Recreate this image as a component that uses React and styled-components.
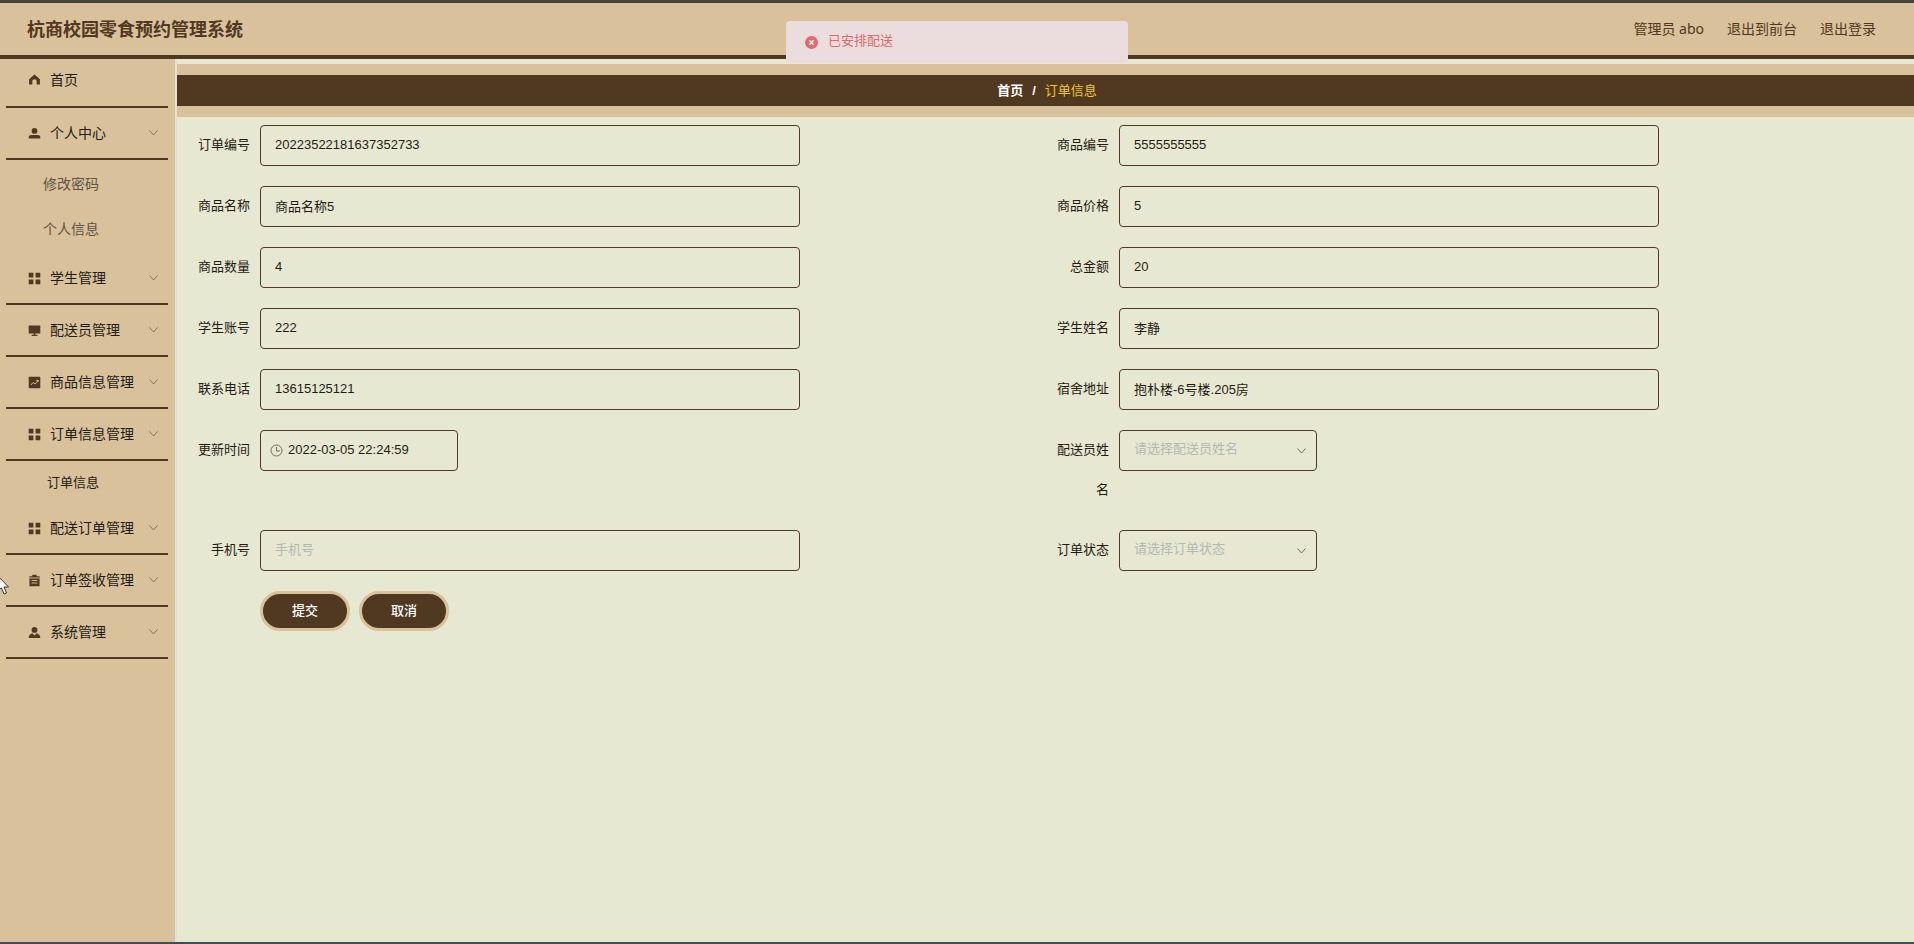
import React from "react";
import styled, { createGlobalStyle, css } from "styled-components";

const sans = `"Liberation Sans", "Noto Sans CJK SC", sans-serif`;
const menuSans = `"Noto Sans", "Noto Sans CJK SC", sans-serif`;

const GlobalStyle = createGlobalStyle`
  * {
    box-sizing: border-box;
  }
  body {
    margin: 0;
    background-color: #e7e8d2;
    font-family: ${sans};
    font-size: 13px;
    color: #1f1c14;
  }
  a {
    color: inherit;
    text-decoration: none;
  }
  button, input, select {
    font-family: inherit;
    font-size: inherit;
  }
`;

const Page = styled.div`
  display: flex;
  flex-direction: column;
  min-height: 100vh;
  border-top: 3px solid #45443c;
  border-bottom: 2px solid #3a4f58;
`;

const Header = styled.header`
  display: flex;
  justify-content: space-between;
  align-items: center;
  height: 56px;
  padding: 0 38px 0 27px;
  background-color: #d9c19b;
  border-bottom: 4px solid #503821;
  color: #503821;
  font-family: ${menuSans};
`;

const Title = styled.h1`
  margin: 0;
  font-size: 18px;
  line-height: 24px;
  font-weight: 600;
`;

const UserNav = styled.nav`
  display: flex;
  gap: 23px;
  font-size: 14px;
  line-height: 24px;
`;

const Body = styled.div`
  display: flex;
  flex: 1;
`;

const Sidebar = styled.aside`
  flex: none;
  width: 177px;
  padding: 0 7px 0 6px;
  background-color: #d9c19b;
  border-right: 2px solid #e4e1d2;
  font-family: ${menuSans};
`;

const MenuItem = styled.a`
  display: flex;
  align-items: center;
  height: ${(props) => (props.$first ? "49px" : "52px")};
  padding: 0 10px ${(props) => (props.$first ? "6px" : "0")} 22px;
  border-bottom: 2px solid #503821;
  font-size: 14px;
  line-height: 20px;
  svg:first-child {
    margin-right: 9px;
  }
`;

const MenuText = styled.span`
  flex: 1;
  white-space: nowrap;
`;

const SubMenu = styled.div`
  display: flex;
  flex-direction: column;
  padding: ${(props) => (props.$current ? "0" : "1px 0 2px")};
`;

const SubItem = styled.a`
  padding-left: 37px;
  font-size: 14px;
  line-height: 45px;
  color: #5e5443;
  ${(props) =>
    props.$current &&
    css`
      padding-left: 41px;
      font-size: 13px;
      line-height: 42px;
      color: #1f1c14;
    `}
`;

const Main = styled.main`
  flex: 1;
  min-width: 0;
  padding-top: 5px;
`;

const Breadcrumb = styled.nav`
  display: flex;
  justify-content: center;
  gap: 9px;
  padding-left: 3px;
  border: solid #d9c19b;
  border-width: 11px 0;
  background-color: #503821;
  color: #fff;
  font-weight: 600;
  line-height: 31px;
`;

const Current = styled.span`
  color: #f2c81e;
  font-weight: 400;
`;

const Form = styled.form`
  display: grid;
  grid-template-columns: 1fr 1fr;
  row-gap: 20px;
  padding: 8px 8px 20px 11px;
`;

const FormItem = styled.div`
  display: flex;
  align-items: flex-start;
  min-height: 41px;
`;

const Label = styled.label`
  flex: none;
  width: 72px;
  padding-right: 10px;
  text-align: right;
  line-height: 40px;
`;

const Field = styled.div`
  display: flex;
  align-items: center;
  gap: 5px;
  width: ${(props) => (props.$short ? "198px" : "540px")};
  height: 41px;
  padding: 0 ${(props) => (props.$short ? "10px" : "14px")} 0
    ${(props) => (props.$icon ? "9px" : "14px")};
  border: 1px solid #503821;
  border-radius: 4px;
`;

const control = css`
  flex: 1;
  min-width: 0;
  height: 39px;
  padding: 0 0 2px;
  border: none;
  outline: none;
  background: transparent;
  color: #1f1c14;
`;

const Input = styled.input`
  ${control}
  &::placeholder {
    color: #b4b8b4;
    opacity: 1;
  }
`;

const Select = styled.select`
  ${control}
  padding-bottom: 4px;
  appearance: none;
  color: #b4b8b4;
`;

const Actions = styled.div`
  display: flex;
  grid-column: 1 / -1;
  gap: 9px;
  padding-left: 72px;
`;

const Button = styled.button`
  width: 90px;
  height: 40px;
  padding: 0 0 4px;
  border: 3px solid #d9c19b;
  border-radius: 20px;
  background-color: #503821;
  color: #fff;
  font-weight: 500;
`;

const Toast = styled.div`
  position: fixed;
  top: 21px;
  left: 50%;
  transform: translateX(-50%);
  display: flex;
  align-items: center;
  gap: 10px;
  width: 342px;
  height: 42px;
  padding-left: 19px;
  border-radius: 4px;
  background-color: #ebdddd;
  color: #de6a6c;
  line-height: 18px;
`;

const ToastText = styled.span`
  padding-bottom: 2px;
`;

const Pointer = styled.svg`
  position: fixed;
  top: 575px;
  left: 0;
`;

const glyphs = {
  home: <path d="M8 1 .5 7.500V15H5v-4.500a3 3 0 0 1 6 0V15h4.500V7.500z" />,
  user: (
    <>
      <circle cx="8" cy="4.500" r="4" />
      <path d="M0 15v-2q0-3 4-3h8q4 0 4 3v2z" />
    </>
  ),
  grid: <path d="M0 0h6.500v6.500H0zM9.500 0H16v6.500H9.500zM0 9.500h6.500V16H0zM9.500 9.500H16V16H9.500z" />,
  monitor: <path d="M0 1h16v11H9v2h3v1.500H4V14h3v-2H0z" />,
  chart: (
    <>
      <rect width="16" height="16" rx="1" />
      <path d="M3 11.500 6 8l3 2 4-5M10.500 5H13v2.500" fill="none" stroke="#d9c19b" strokeWidth="1.300" />
    </>
  ),
  clipboard: (
    <>
      <path d="M1 2h4V0h6v2h4v14H1z" />
      <path d="M1 4.500h14M4 8h8M4 11.500h8" stroke="#d9c19b" strokeWidth="1.300" />
    </>
  ),
  admin: (
    <>
      <circle cx="8" cy="4.500" r="4" />
      <path d="M0 15.500q0-5 5-6.500l3 3 3-3q5 1.500 5 6.500z" />
    </>
  ),
};

const Glyph = ({ name }) => (
  <svg width="13" height="13" viewBox="-1 -1 18 18" fill="#503821">
    {glyphs[name]}
  </svg>
);

const Chevron = ({ color = "#8c7654" }) => (
  <svg width="9" height="6" viewBox="0 0 9 6" fill="none" stroke={color}>
    <path d="M.5.5l4 4.500 4-4.500" />
  </svg>
);

const Clock = () => (
  <svg width="13" height="13" viewBox="0 0 13 13" fill="none" stroke="#6f6b58">
    <circle cx="6.500" cy="6.500" r="5.500" />
    <path d="M6.500 3v4H10" />
  </svg>
);

const menu = [
  { icon: "home", text: "首页", leaf: true },
  { icon: "user", text: "个人中心", children: ["修改密码", "个人信息"] },
  { icon: "grid", text: "学生管理" },
  { icon: "monitor", text: "配送员管理" },
  { icon: "chart", text: "商品信息管理" },
  { icon: "grid", text: "订单信息管理", children: ["订单信息"], current: true },
  { icon: "grid", text: "配送订单管理" },
  { icon: "clipboard", text: "订单签收管理" },
  { icon: "admin", text: "系统管理" },
];

const fields = [
  { id: "orderNo", label: "订单编号", value: "20223522181637352733" },
  { id: "goodsNo", label: "商品编号", value: "5555555555" },
  { id: "goodsName", label: "商品名称", value: "商品名称5" },
  { id: "price", label: "商品价格", value: "5" },
  { id: "count", label: "商品数量", value: "4" },
  { id: "total", label: "总金额", value: "20" },
  { id: "account", label: "学生账号", value: "222" },
  { id: "student", label: "学生姓名", value: "李静" },
  { id: "phone", label: "联系电话", value: "13615125121" },
  { id: "address", label: "宿舍地址", value: "抱朴楼-6号楼.205房" },
  { id: "updated", label: "更新时间", value: "2022-03-05 22:24:59", type: "date" },
  { id: "courier", label: "配送员姓名", hint: "请选择配送员姓名", type: "select" },
  { id: "mobile", label: "手机号", hint: "手机号" },
  { id: "status", label: "订单状态", hint: "请选择订单状态", type: "select" },
];

const FormField = ({ id, label, value, hint, type }) => (
  <FormItem>
    <Label htmlFor={id}>{label}</Label>
    <Field $short={Boolean(type)} $icon={type === "date"}>
      {type === "date" && <Clock />}
      {type === "select" ? (
        <>
          <Select id={id} defaultValue="">
            <option value="">{hint}</option>
          </Select>
          <Chevron color="#6f6b58" />
        </>
      ) : (
        <Input id={id} type="text" defaultValue={value} placeholder={hint} />
      )}
    </Field>
  </FormItem>
);

export default function App() {
  return (
    <>
      <GlobalStyle />
      <Page>
        <Header>
          <Title>杭商校园零食预约管理系统</Title>
          <UserNav>
            <span>管理员 abo</span>
            <a href="#front">退出到前台</a>
            <a href="#logout">退出登录</a>
          </UserNav>
        </Header>
        <Body>
          <Sidebar>
            {menu.map(({ icon, text, leaf, children, current }) => (
              <React.Fragment key={text}>
                <MenuItem href="#menu" $first={leaf}>
                  <Glyph name={icon} />
                  <MenuText>{text}</MenuText>
                  {!leaf && <Chevron />}
                </MenuItem>
                {children && (
                  <SubMenu $current={current}>
                    {children.map((child) => (
                      <SubItem key={child} href="#page" $current={current}>
                        {child}
                      </SubItem>
                    ))}
                  </SubMenu>
                )}
              </React.Fragment>
            ))}
          </Sidebar>
          <Main>
            <Breadcrumb>
              <a href="#home">首页</a>
              <span>/</span>
              <Current>订单信息</Current>
            </Breadcrumb>
            <Form onSubmit={(e) => e.preventDefault()}>
              {fields.map((field) => (
                <FormField key={field.id} {...field} />
              ))}
              <Actions>
                <Button type="submit">提交</Button>
                <Button type="button">取消</Button>
              </Actions>
            </Form>
          </Main>
        </Body>
      </Page>
      <Toast role="alert">
        <svg width="13" height="13" viewBox="0 0 12 12">
          <circle cx="6" cy="6" r="6" fill="#de6a6c" />
          <path d="m4 4 4 4M8 4 4 8" stroke="#fff" strokeWidth="1.200" />
        </svg>
        <ToastText>已安排配送</ToastText>
      </Toast>
      <Pointer width="9" height="21" viewBox="0 0 9 21" fill="#fff" stroke="#333">
        <path d="M-4-1 8.500 12H4l2.500 6-2.500 1-2.500-6L-4 17z" />
      </Pointer>
    </>
  );
}
